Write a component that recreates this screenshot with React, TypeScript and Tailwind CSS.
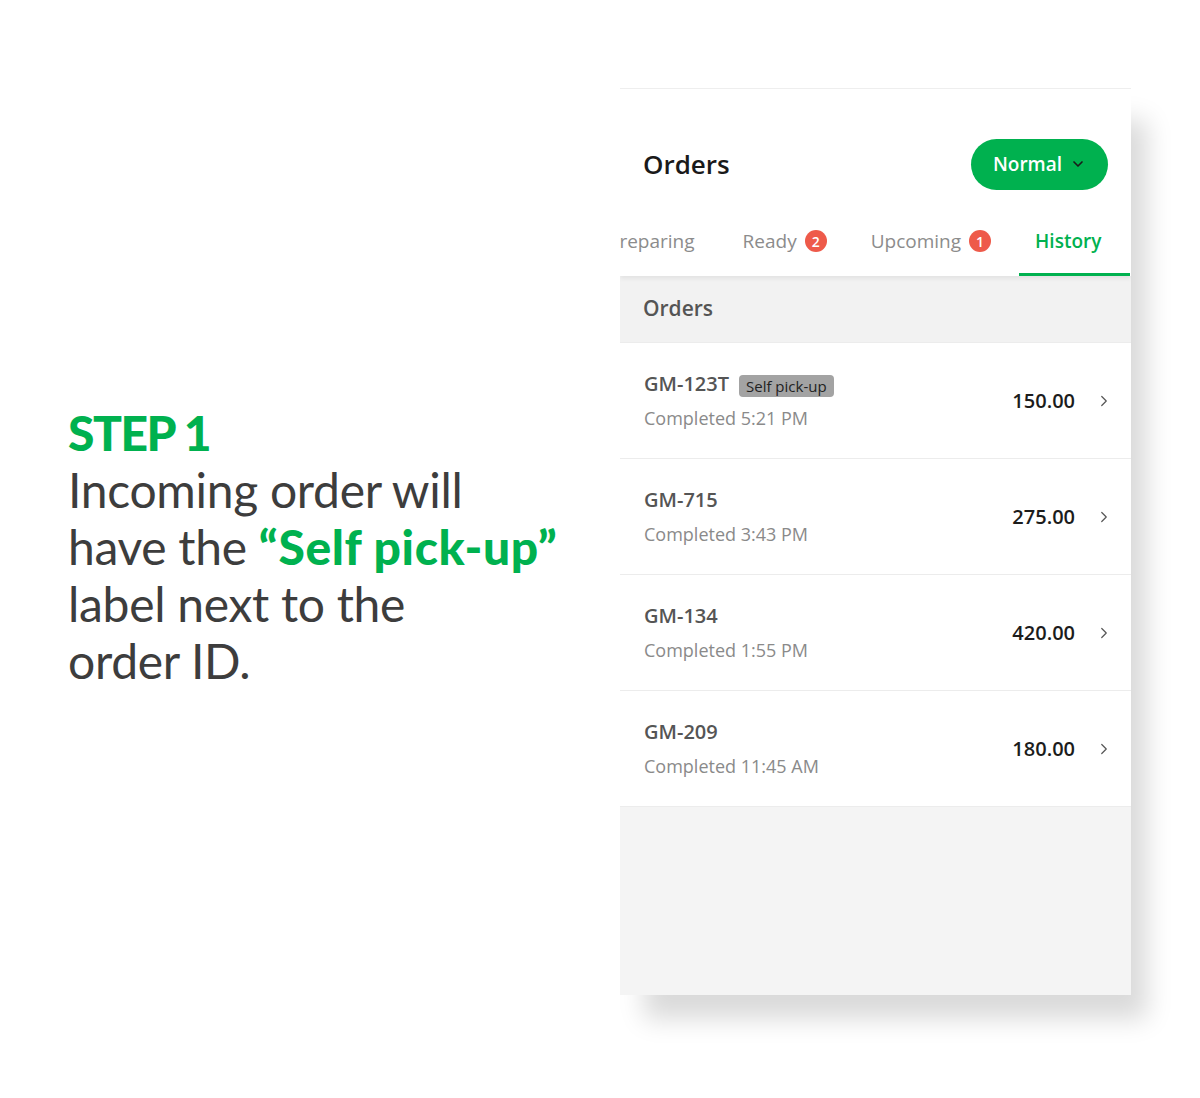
import { ChevronDown, ChevronRight } from 'lucide-react';

const orders = [
  { id: 'GM-123T', time: 'Completed 5:21 PM', total: '150.00', pickup: true },
  { id: 'GM-715', time: 'Completed 3:43 PM', total: '275.00', pickup: false },
  { id: 'GM-134', time: 'Completed 1:55 PM', total: '420.00', pickup: false },
  { id: 'GM-209', time: 'Completed 11:45 AM', total: '180.00', pickup: false },
];

const Badge = ({ n }: { n: number }) => (
  <span className="ml-2 flex h-[22px] w-[22px] items-center justify-center rounded-full bg-[#ee5a4a] text-[14px] font-semibold text-white">
    {n}
  </span>
);

const OrderRow = ({ order }: { order: (typeof orders)[number] }) => (
  <div className="flex h-[116px] items-center border-b border-[#ececec] bg-white pl-[24px] pr-[18px]">
    <div className="flex-1">
      <div className="flex items-center">
        <span className="text-[20px] font-semibold text-[#555]">{order.id}</span>
        {order.pickup && (
          <span className="ml-[10px] mt-[4px] rounded-[4px] bg-[#a3a3a3] px-[7px] text-[15px] leading-[22px] text-[#222]">
            Self pick-up
          </span>
        )}
      </div>
      <p className="mt-[6px] text-[18px] text-[#8a8a8a]">{order.time}</p>
    </div>
    <span className="text-[20px] font-semibold text-[#1c1c1c]">{order.total}</span>
    <ChevronRight size={18} strokeWidth={1.6} className="ml-[20px] text-[#555]" />
  </div>
);

export default function App() {
  return (
    <div className="flex h-[1098px] w-[1200px] overflow-hidden bg-white">
      <div className="w-[620px] shrink-0 pl-[68px] pt-[404px] font-['Lato',sans-serif] text-[48px] leading-[57px] tracking-[-0.3px] text-[#3d3d3d]">
        <p className="font-black tracking-[-1.5px] text-[#00b14f]">STEP 1</p>
        <p>
          Incoming order will
          <br />
          have the <span className="font-black tracking-[0.6px] text-[#00b14f]">“Self pick-up”</span>
          <br />
          label next to the
          <br />
          order ID.
        </p>
      </div>

      <div className="mt-[88px] flex h-[907px] w-[511px] shrink-0 flex-col overflow-hidden border-t border-[#eeeeee] bg-[#f4f4f4] font-['Open_Sans',sans-serif] shadow-[20px_28px_24px_-4px_rgba(0,0,0,0.15)]">
        <div className="relative z-10 bg-white shadow-[0_3px_4px_rgba(0,0,0,0.06)]">
          <div className="flex h-[138px] items-center justify-between pl-[23px] pr-[23px] pt-[12px]">
            <h1 className="text-[26px] font-semibold text-[#1a1a1a]">Orders</h1>
            <button className="flex h-[51px] w-[137px] items-center justify-center rounded-full bg-[#00b14f] text-[19px] font-semibold text-white">
              Normal
              <ChevronDown size={16} strokeWidth={2.5} className="ml-[8px] text-[#1a1a1a]" />
            </button>
          </div>
          <div className="flex h-[49px] items-start text-[19px] text-[#8c8c8c]">
            <span className="-ml-[12px]">Preparing</span>
            <span className="ml-[48px] flex items-center">
              Ready
              <Badge n={2} />
            </span>
            <span className="ml-[44px] flex items-center">
              Upcoming
              <Badge n={1} />
            </span>
            <span className="ml-[28px] flex h-full w-[111px] border-b-[3px] border-[#00b14f] pl-[16px] font-semibold text-[#00b14f]">
              History
            </span>
          </div>
        </div>
        <div className="flex h-[67px] items-center border-b border-[#ececec] bg-[#f2f2f2] pl-[23px] text-[21px] font-semibold text-[#555]">
          Orders
        </div>
        {orders.map((o) => (
          <OrderRow key={o.id} order={o} />
        ))}
      </div>
    </div>
  );
}
